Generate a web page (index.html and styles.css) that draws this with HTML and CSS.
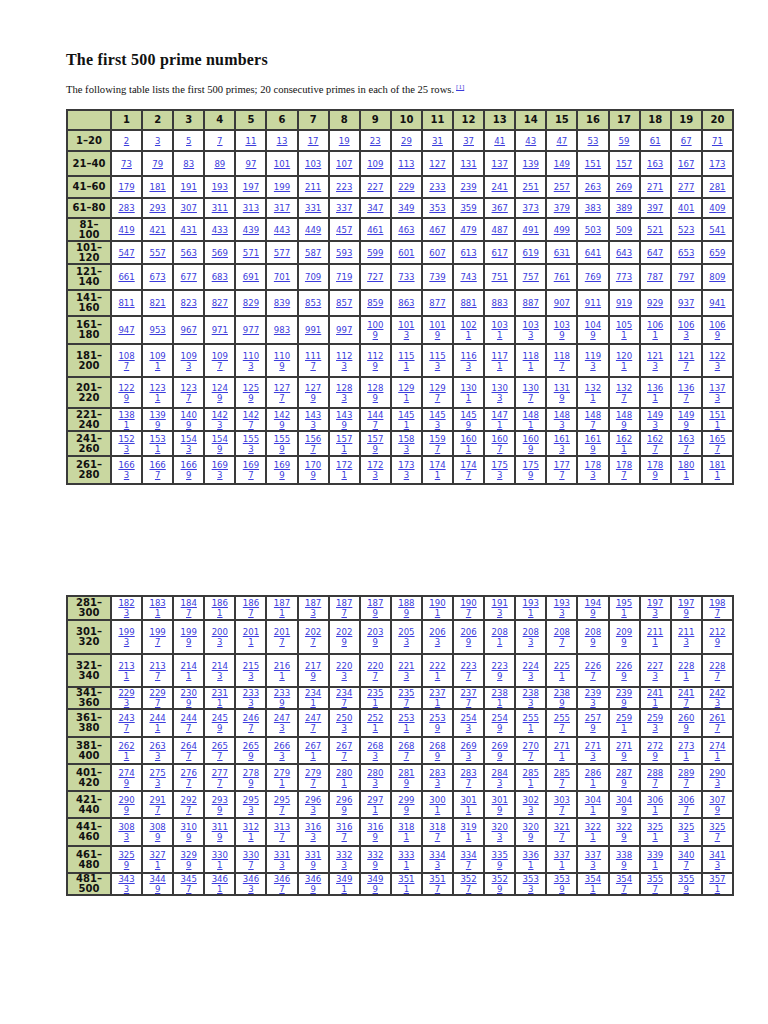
FILE: index.html
```html
<!DOCTYPE html>
<html lang="en">
<head>
<meta charset="utf-8">
<title>The first 500 prime numbers</title>
<link rel="stylesheet" href="styles.css">
</head>
<body>
<main class="page">
  <h1 class="title">The first 500 prime numbers</h1>
  <p class="intro">The following table lists the first 500 primes; 20 consecutive primes in each of the 25 rows.<sup class="ref"><a href="#note-1">[1]</a></sup></p>

  <table class="primes">
    <colgroup><col class="label-col"><col span="20"></colgroup>
    <thead>
      <tr class="r20">
        <th></th><th>1</th><th>2</th><th>3</th><th>4</th><th>5</th><th>6</th><th>7</th><th>8</th><th>9</th><th>10</th>
        <th>11</th><th>12</th><th>13</th><th>14</th><th>15</th><th>16</th><th>17</th><th>18</th><th>19</th><th>20</th>
      </tr>
    </thead>
    <tbody id="part-1"></tbody>
  </table>

  <table class="primes second">
    <colgroup><col class="label-col"><col span="20"></colgroup>
    <tbody id="part-2"></tbody>
  </table>
</main>
<script src="script.js"></script>
</body>
</html>
```

FILE: styles.css
```css
html, body {
  margin: 0;
  padding: 0;
  background: #ffffff;
}

.page {
  padding: 51px 0 40px 66px;
}

.title {
  margin: 0;
  font-family: "Liberation Serif", "Times New Roman", serif;
  font-weight: bold;
  font-size: 16px;
  line-height: 18px;
  letter-spacing: 0.2px;
  color: #111;
}

.intro {
  margin: 15px 0 0 0;
  font-family: "Liberation Serif", "Times New Roman", serif;
  font-size: 10.6px;
  line-height: 12px;
  color: #111;
}

.ref {
  font-size: 7px;
  line-height: 0;
  vertical-align: 4px;
  margin-left: 2px;
}

.ref a {
  color: #3c3cdc;
}

.primes {
  margin-top: 13px;
  width: 668px;
  table-layout: fixed;
  border-collapse: collapse;
  border: 2px solid #111;
  font-family: "DejaVu Sans Condensed", "DejaVu Sans", sans-serif;
}

.primes.second {
  margin-top: 110px;
}

.label-col {
  width: 44px;
}

.primes th,
.primes td {
  border: 2px solid #3a3a3a;
  padding: 0 5px;
  text-align: center;
  vertical-align: middle;
}

.primes th {
  background: #c9d7a0;
  font-family: "DejaVu Sans", sans-serif;
  font-weight: bold;
  font-size: 10px;
  line-height: 10px;
  color: #111;
  padding: 0 3px;
}

.primes td {
  font-size: 9.5px;
  line-height: 10px;
  word-break: break-all;
}

.primes td a {
  color: #3c3cdc;
  text-decoration: underline;
}

.r20 { height: 20px; }
.r21 { height: 21px; }
.r22 { height: 22px; }
.r23 { height: 23px; }
.r24 { height: 24px; }
.r25 { height: 25px; }
.r26 { height: 26px; }
.r27 { height: 27px; }
.r28 { height: 28px; }
.r31 { height: 31px; }
.r33 { height: 33px; }
.r34 { height: 34px; }
```

FILE: script.js
```js
(function () {
  var primes = [];
  for (var n = 2; primes.length < 500; n++) {
    var isPrime = true;
    for (var i = 0; i < primes.length && primes[i] * primes[i] <= n; i++) {
      if (n % primes[i] === 0) { isPrime = false; break; }
    }
    if (isPrime) primes.push(n);
  }

  var rowClasses = [
    "r21", "r25", "r22", "r20", "r23", "r23", "r26", "r26", "r28", "r33", "r31", "r23", "r25", "r28",
    "r24", "r34", "r33", "r21", "r28", "r27", "r27", "r27", "r28", "r27", "r22"
  ];

  var part1 = document.getElementById("part-1");
  var part2 = document.getElementById("part-2");

  for (var r = 0; r < 25; r++) {
    var tr = document.createElement("tr");
    tr.className = rowClasses[r];
    var th = document.createElement("th");
    th.textContent = (r * 20 + 1) + "\u2013" + (r * 20 + 20);
    tr.appendChild(th);
    for (var c = 0; c < 20; c++) {
      var td = document.createElement("td");
      var a = document.createElement("a");
      a.href = "#p" + primes[r * 20 + c];
      a.textContent = primes[r * 20 + c];
      td.appendChild(a);
      tr.appendChild(td);
    }
    (r < 14 ? part1 : part2).appendChild(tr);
  }
})();
```
